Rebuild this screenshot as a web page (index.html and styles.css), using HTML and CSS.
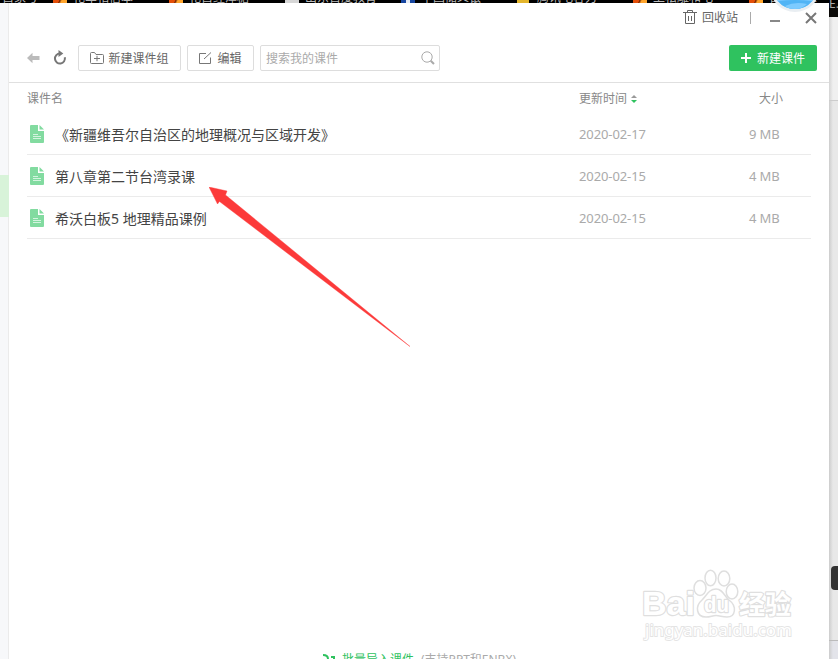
FILE: index.html
```html
<!DOCTYPE html>
<html lang="zh-CN">
<head>
    <meta charset="UTF-8">
    <meta name="viewport" content="width=device-width, initial-scale=1.0">
    <title>我的课件</title>
    <link rel="stylesheet" href="styles.css">
</head>
<body>
    <!-- Browser tabs behind the window -->
    <div class="tab-strip">
        <div class="tab first">自家号</div>
        <div class="tab"><span class="tab-icon orange"></span>花车相信本</div>
        <div class="tab"><span class="tab-icon orange"></span>花自经泽糖</div>
        <div class="tab"><span class="tab-icon grey"></span>山东百度教育</div>
        <div class="tab"><span class="tab-icon blue"></span>中国储义银</div>
        <div class="tab"><span class="tab-icon yellow"></span>腾讯电容力</div>
        <div class="tab"><span class="tab-icon orange"></span>上松雕和电</div>
        <div class="tab"><span class="tab-icon orange"></span>百度经验</div>
    </div>

    <div class="desktop">
        <aside class="left-edge">
            <div class="left-active"></div>
        </aside>

        <main class="window">
            <div class="title-bar">
                <svg class="trash-icon" width="14" height="15" viewBox="0 0 14 15" fill="none" stroke="#666">
                    <path d="M0 2.500h14M4.500 2.500v-2h5v2M2.500 3v10.500h9v-10.500M5.500 6v5M8.500 6v5"/>
                </svg>
                <span class="trash-label">回收站</span>
                <span class="divider"></span>
                <span class="minimize"></span>
                <svg class="close-icon" width="12" height="12" viewBox="0 0 12 12" stroke="#777" stroke-width="2">
                    <path d="M1 1l10 10M11 1L1 11"/>
                </svg>
            </div>

            <div class="toolbar">
                <svg class="back-icon" width="13" height="12" viewBox="0 0 13 12" fill="#bbb">
                    <path d="M0 6L5.500 .7V4H12.500V8H5.500V11.300Z"/>
                </svg>
                <svg class="reload-icon" width="14" height="15" viewBox="0 0 14 15">
                    <path d="M7 3.500A5 5 0 1 0 11.800 7.300" fill="none" stroke="#777" stroke-width="2"/>
                    <path d="M5.500 0L10.300 3.400L5.500 7Z" fill="#777"/>
                </svg>
                <button class="btn btn-group">
                    <svg width="14" height="12" viewBox="0 0 14 12" fill="none" stroke="#777">
                        <path d="M.5 1.500q0-1 1-1h3l1.500 2h6.500q1 0 1 1v7q0 1-1 1h-11q-1 0-1-1zM4 6.500h6M7 3.800v5.400"/>
                    </svg>新建课件组
                </button>
                <button class="btn btn-edit">
                    <svg width="13" height="12" viewBox="0 0 13 12" fill="none" stroke="#777">
                        <path d="M7 1.500H.5v10h11V5.500M5 7L12 .5"/>
                    </svg>编辑
                </button>
                <div class="search">
                    <span>搜索我的课件</span>
                    <svg width="14" height="14" viewBox="0 0 14 14" fill="none" stroke="#aaa">
                        <circle cx="6" cy="6" r="5.200"/>
                        <path d="M9.700 9.700L13 13" stroke-width="2"/>
                    </svg>
                </div>
                <button class="btn-new">
                    <svg width="10" height="10" viewBox="0 0 10 10" stroke="#fff" stroke-width="2">
                        <path d="M0 5h10M5 0v10"/>
                    </svg>新建课件
                </button>
            </div>

            <div class="list-head">
                <span class="col-name">课件名</span>
                <span class="col-date">更新时间
                    <svg width="6" height="8" viewBox="0 0 6 8">
                        <path d="M3 0L6 3H0Z" fill="#999"/>
                        <path d="M3 8L0 5H6Z" fill="#2fc25f"/>
                    </svg>
                </span>
                <span class="col-size">大小</span>
            </div>

            <div class="list">
                <div class="row">
                    <svg class="file-icon" width="14" height="18" viewBox="0 0 14 18">
                        <path d="M1 0H8V6H14V17q0 1-1 1H1q-1 0-1-1V1q0-1 1-1Z" fill="#82dba0"/>
                        <path d="M9.500 0L14 4.500H9.500Z" fill="#82dba0"/>
                        <path d="M3 9.500h5M3 11.500h8M3 13.500h8" stroke="#d4f3df"/>
                    </svg>
                    <span class="file-name">《新疆维吾尔自治区的地理概况与区域开发》</span>
                    <span class="file-date">2020-02-17</span>
                    <span class="file-size">9 MB</span>
                </div>
                <div class="row">
                    <svg class="file-icon" width="14" height="18" viewBox="0 0 14 18">
                        <path d="M1 0H8V6H14V17q0 1-1 1H1q-1 0-1-1V1q0-1 1-1Z" fill="#82dba0"/>
                        <path d="M9.500 0L14 4.500H9.500Z" fill="#82dba0"/>
                        <path d="M3 9.500h5M3 11.500h8M3 13.500h8" stroke="#d4f3df"/>
                    </svg>
                    <span class="file-name">第八章第二节台湾录课</span>
                    <span class="file-date">2020-02-15</span>
                    <span class="file-size">4 MB</span>
                </div>
                <div class="row">
                    <svg class="file-icon" width="14" height="18" viewBox="0 0 14 18">
                        <path d="M1 0H8V6H14V17q0 1-1 1H1q-1 0-1-1V1q0-1 1-1Z" fill="#82dba0"/>
                        <path d="M9.500 0L14 4.500H9.500Z" fill="#82dba0"/>
                        <path d="M3 9.500h5M3 11.500h8M3 13.500h8" stroke="#d4f3df"/>
                    </svg>
                    <span class="file-name">希沃白板5 地理精品课例</span>
                    <span class="file-date">2020-02-15</span>
                    <span class="file-size">4 MB</span>
                </div>
            </div>

            <div class="import-bar">
                <svg width="14" height="10" viewBox="0 0 14 10" fill="none" stroke="#2fc25f" stroke-width="2">
                    <path d="M1 1q5 0 5 4t-5 4M9 3h3v6"/>
                </svg>
                <span class="import-link">批量导入课件</span>
                <span class="import-note">(支持PPT和ENBX)</span>
            </div>
        </main>

        <aside class="right-edge">
            <div class="edge-top"></div>
            <div class="edge-head"></div>
            <div class="edge-body"><span class="edge-tab"></span></div>
            <div class="edge-foot"></div>
        </aside>
    </div>

    <span class="edge-letter">E.</span>

    <!-- Floating ball -->
    <svg class="ball" width="50" height="16" viewBox="0 0 50 16">
        <circle cx="25" cy="-13" r="25" fill="#e9eef2"/>
        <circle cx="25" cy="-14" r="23" fill="#7ecbff"/>
        <path d="M8 1Q25-1 42 1Q36 9 25 9Q14 9 8 1Z" fill="#50b4f5"/>
        <path d="M15 6Q25 1 37 4Q32 9 25 9Q18 9 15 6Z" fill="#7dcbff"/>
    </svg>

    <!-- Pointer arrow -->
    <svg class="arrow" width="202" height="160" viewBox="0 0 202 160">
        <path d="M0 0L18 4L16.500 8L201 159.500L199 158L10.500 14.500L8.500 17Z" fill="#fc3a3a" stroke="#fc3a3a" stroke-width=".4"/>
    </svg>

    <!-- Watermark -->
    <div class="watermark">
        <svg class="paw" width="46" height="50" viewBox="0 0 46 50" fill="#fff" stroke="#dfdfdf" stroke-width="1.500">
            <ellipse cx="7" cy="19" rx="6" ry="7.500"/>
            <ellipse cx="17.500" cy="9" rx="5.500" ry="7.700"/>
            <ellipse cx="31" cy="9.500" rx="5.800" ry="7.500"/>
            <ellipse cx="39" cy="22.500" rx="5.800" ry="7.500"/>
            <path d="M23 20C16 20 14 26 9 31C2 37 3 48 13 48C18 48 19 46.500 23 46.500C27 46.500 29 48 34 48C43 48 44 37 36 31C31 27 30 20 23 20Z"/>
        </svg>
        <svg class="mark-text" width="160" height="80" viewBox="0 0 160 80">
            <g class="mark-main">
                <text x="2" y="50" font-size="34" textLength="53" lengthAdjust="spacingAndGlyphs">Bai</text>
                <text class="mark-du" x="64" y="47" font-size="22" textLength="25" lengthAdjust="spacingAndGlyphs">du</text>
                <text class="mark-cjk" x="99" y="49" font-size="26" textLength="52">经验</text>
            </g>
            <text class="mark-url" x="5" y="71" font-size="17" textLength="147" lengthAdjust="spacingAndGlyphs">jingyan.baidu.com</text>
        </svg>
    </div>
</body>
</html>
```

FILE: styles.css
```css
:root {
    --green: #2fc25f;
    --border: #ddd;
    --text: #444;
    --muted: #888;
}

* {
    box-sizing: border-box;
}

body {
    margin: 0;
    width: 838px;
    height: 659px;
    overflow: hidden;
    position: relative;
    display: flex;
    flex-direction: column;
    background: #fff;
    font-family: "Noto Sans", "Noto Sans CJK SC", sans-serif;
    font-size: 12px;
    color: var(--text);
}

/* tabs */
.tab-strip {
    display: flex;
    align-items: flex-end;
    height: 3px;
    overflow: hidden;
    background: #000;
    color: #bbb;
}

.tab {
    display: flex;
    align-items: flex-end;
    flex: 0 0 116px;
    height: 16px;
    line-height: 11px;
    white-space: nowrap;
}

.tab.first {
    flex-basis: 53px;
    padding-left: 2px;
}

.tab-icon {
    width: 14px;
    height: 15px;
    margin-right: 6px;
}

.orange {
    background: linear-gradient(115deg, #e34e08 55%, #702000 60%, #ffa52c 70%);
}

.grey {
    background: #d6d6d6;
}

.blue {
    background: linear-gradient(90deg, #1746a0 35%, #e8edf5 35%, #e8edf5 65%, #1746a0 65%);
}

.yellow {
    width: 12px;
    margin-right: 8px;
    background: #e3b52c;
}

.desktop {
    display: flex;
    height: 656px;
}

.left-edge {
    width: 9px;
    padding-top: 172px;
    background: #f7f8fa;
    border-right: 1px solid #ebebeb;
}

.left-active {
    width: 9px;
    height: 42px;
    background: #d8f3d9;
}

.window {
    width: 820px;
    display: flex;
    flex-direction: column;
    background: #fff;
    overflow: hidden;
}

.title-bar {
    display: flex;
    align-items: center;
    height: 29px;
    padding: 0 12px 0 674px;
    color: #666;
}

.trash-label {
    margin-left: 5px;
    line-height: 28px;
    white-space: nowrap;
}

.divider {
    width: 1px;
    height: 12px;
    margin-left: 12px;
    background: #aaa;
}

.minimize {
    width: 10px;
    height: 2px;
    margin: 6px 0 0 19px;
    background: #888;
}

.close-icon {
    margin: 0 0 0 auto;
}

.toolbar {
    display: flex;
    align-items: center;
    height: 51px;
    flex: none;
    padding: 1px 12px 0 18px;
    border-bottom: 1px solid #e0e0e0;
}

.reload-icon {
    margin: 0 11px 0 13px;
}

.btn,
.btn-new {
    display: flex;
    align-items: center;
    justify-content: center;
    height: 26px;
    padding: 0;
    font: inherit;
    white-space: nowrap;
    border: 1px solid var(--border);
    border-radius: 2px;
    background: #fff;
    color: #666;
}

.btn svg {
    margin-right: 4px;
}

.btn-group {
    width: 103px;
}

.btn-edit {
    width: 67px;
    margin-left: 6px;
}

.btn-edit svg {
    margin-right: 5px;
}

.search {
    display: flex;
    align-items: center;
    justify-content: space-between;
    width: 180px;
    height: 26px;
    margin-left: 6px;
    padding: 0 4px 0 5px;
    border: 1px solid var(--border);
    border-radius: 2px;
    color: #aaa;
}

.btn-new {
    width: 88px;
    margin-left: auto;
    border: none;
    background: var(--green);
    color: #fff;
}

.btn-new svg {
    margin-right: 6px;
}

/* list */
.list-head {
    display: grid;
    grid-template-columns: 552px 180px 1fr;
    align-items: center;
    height: 30px;
    flex: none;
    padding: 0 18px;
    color: var(--muted);
}

.col-date svg {
    margin-left: 1px;
}

.list {
    margin: 0 18px;
}

.row {
    display: grid;
    grid-template-columns: 28px 524px 170px 1fr;
    align-items: center;
    height: 42px;
    border-bottom: 1px solid #ebebeb;
}

.file-icon {
    margin-left: 3px;
}

.file-name {
    font-size: 14px;
    white-space: nowrap;
}

.file-date,
.file-size {
    font-size: 13px;
    letter-spacing: -0.1px;
    color: #aaa;
}

.import-bar {
    display: flex;
    align-items: center;
    height: 18px;
    flex: none;
    margin: auto 0 -9px 313px;
    white-space: nowrap;
}

.import-link {
    margin-left: 6px;
    color: var(--green);
}

.import-note {
    margin-left: 7px;
    color: #aaa;
}

.right-edge {
    width: 9px;
    background: linear-gradient(90deg, #ccc, #e8e8e8 4px);
}

.edge-top {
    height: 14px;
    background: #0b0a08;
}

.edge-head {
    height: 84px;
    background: linear-gradient(90deg, #d4d4d4, #f0f0f0 4px);
    border-bottom: 1px solid #ccc;
    border-top-right-radius: 3px;
}

.edge-body {
    height: 540px;
    padding: 465px 0 0 2px;
    border-bottom: 1px solid #bbb;
}

.edge-tab {
    display: block;
    height: 24px;
    background: #333;
    border-radius: 4px 0 0 4px;
}

.edge-foot {
    height: 18px;
    background: linear-gradient(90deg, #ccc, #e3e4ea 4px);
}

.edge-letter {
    position: absolute;
    left: 829px;
    top: -4px;
    line-height: 16px;
    color: #aaa;
}

.ball {
    position: absolute;
    left: 770px;
    top: 0;
}

.arrow {
    position: absolute;
    left: 209px;
    top: 187px;
}

.watermark {
    position: absolute;
    left: 640px;
    top: 565px;
    width: 160px;
    height: 80px;
}

.paw {
    position: absolute;
    left: 53px;
    top: 4px;
}

.mark-text {
    position: absolute;
    left: 0;
    top: 0;
    font-family: "Liberation Sans", "Noto Sans CJK SC", sans-serif;
    font-weight: bold;
}

.mark-main text {
    fill: #fff;
    stroke: #dfdfdf;
    stroke-width: 2.4px;
    stroke-linejoin: round;
    paint-order: stroke;
}

.mark-url {
    font-family: "Noto Sans", sans-serif;
    font-weight: normal;
    fill: #fff;
    stroke: #e4e4e4;
    stroke-width: 1.8px;
    paint-order: stroke;
}
```
